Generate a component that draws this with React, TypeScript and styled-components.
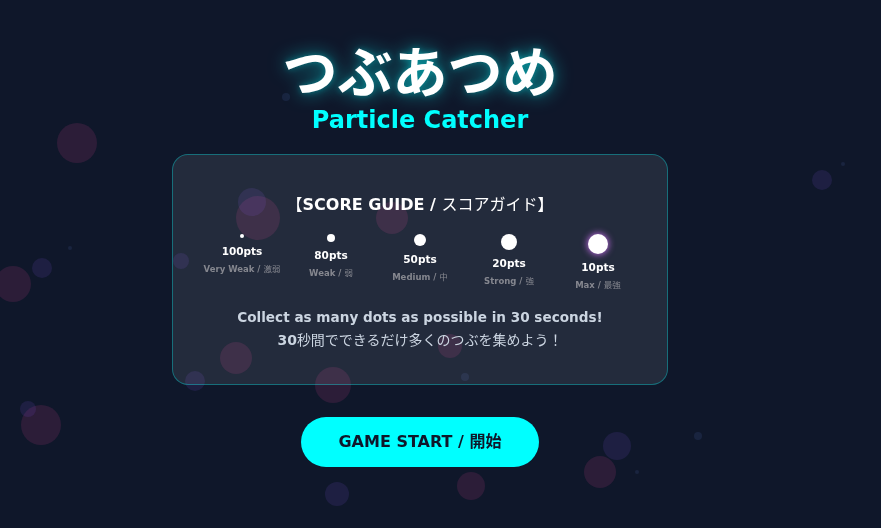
import styled, { createGlobalStyle } from "styled-components";

const GlobalStyle = createGlobalStyle`
  html, body {
    margin: 0;
    padding: 0;
    background: #0f172a;
    font-family: "DejaVu Sans", "Noto Sans CJK JP", sans-serif;
    color: #ffffff;
    overflow: hidden;
  }
`;

const Particles = styled.div`
  position: fixed;
  inset: 0;
  z-index: 0;
  overflow: hidden;
  pointer-events: none;
`;

const Particle = styled.span<{ $x: number; $y: number; $d: number; $c: string }>`
  position: absolute;
  left: ${(p) => p.$x - p.$d / 2}px;
  top: ${(p) => p.$y - p.$d / 2}px;
  width: ${(p) => p.$d}px;
  height: ${(p) => p.$d}px;
  border-radius: 50%;
  background: ${(p) => p.$c};
`;

const Page = styled.main`
  position: relative;
  z-index: 1;
  width: 840px;
  min-height: 528px;
  box-sizing: border-box;
  padding-top: 39px;
  display: flex;
  flex-direction: column;
  align-items: center;
`;

const Title = styled.h1`
  margin: 0;
  font-family: "Noto Sans CJK JP", sans-serif;
  font-size: 55px;
  line-height: 58px;
  font-weight: 700;
  color: #ffffff;
  text-shadow: 0 0 18px rgba(0, 255, 255, 0.55), 0 0 6px rgba(0, 255, 255, 0.3);
`;

const Subtitle = styled.h2`
  margin: 9px 0 0;
  font-size: 24px;
  line-height: 28px;
  font-weight: 700;
  color: #00ffff;
`;

const Card = styled.section`
  margin-top: 20px;
  width: 496px;
  box-sizing: border-box;
  padding: 36px 24px 33px;
  border: 1px solid rgba(0, 255, 255, 0.32);
  border-radius: 16px;
  background: rgba(255, 255, 255, 0.085);
  display: flex;
  flex-direction: column;
  align-items: center;
`;

const GuideTitle = styled.h3`
  margin: 0 0 17px;
  font-size: 16px;
  line-height: 24px;
  font-weight: 700;
  color: #ffffff;
`;

const Jp = styled.span`
  font-family: "Noto Sans CJK JP", sans-serif;
  font-weight: 400;
`;

const Levels = styled.div`
  display: flex;
  justify-content: center;
  align-items: flex-start;
  gap: 9px;
`;

const Level = styled.div`
  width: 80px;
  display: flex;
  flex-direction: column;
  align-items: center;
`;

const Dot = styled.span<{ $size: number; $glow?: boolean }>`
  width: ${(p) => p.$size}px;
  height: ${(p) => p.$size}px;
  border-radius: 50%;
  background: #ffffff;
  margin-bottom: 6px;
  box-shadow: ${(p) => (p.$glow ? "0 0 6px 1px rgba(217, 120, 255, 0.75)" : "none")};
`;

const Points = styled.span`
  font-size: 10.5px;
  line-height: 14px;
  font-weight: 700;
  color: #ffffff;
`;

const Strength = styled.span`
  margin-top: 4px;
  font-size: 8.5px;
  line-height: 12px;
  font-weight: 700;
  color: #85878f;
  white-space: nowrap;
`;

const Desc = styled.p`
  margin: 15px 0 0;
  font-size: 14px;
  line-height: 22px;
  color: #cbd5e1;
  text-align: center;
`;

const DescEn = styled.span`
  display: block;
  font-size: 13.6px;
  font-weight: 700;
`;

const DescJp = styled.span`
  display: block;
  font-family: "Noto Sans CJK JP", sans-serif;
  font-weight: 400;
  b {
    font-family: "DejaVu Sans", sans-serif;
    font-weight: 700;
  }
`;

const StartButton = styled.button`
  margin-top: 32px;
  padding: 14px 37px;
  border: none;
  border-radius: 999px;
  background: #00ffff;
  color: #0f172a;
  font-family: "DejaVu Sans", "Noto Sans CJK JP", sans-serif;
  font-size: 16px;
  line-height: 22px;
  font-weight: 700;
  cursor: pointer;
`;

const PINK = "rgba(236, 72, 153, 0.13)";
const VIOLET = "rgba(139, 92, 246, 0.12)";
const BLUE = "rgba(96, 130, 220, 0.12)";

const particles = [
  { x: 77, y: 143, d: 40, c: PINK },
  { x: 13, y: 284, d: 36, c: PINK },
  { x: 42, y: 268, d: 20, c: VIOLET },
  { x: 70, y: 248, d: 4, c: BLUE },
  { x: 41, y: 425, d: 40, c: PINK },
  { x: 28, y: 409, d: 16, c: VIOLET },
  { x: 195, y: 381, d: 20, c: VIOLET },
  { x: 236, y: 358, d: 32, c: PINK },
  { x: 333, y: 385, d: 36, c: PINK },
  { x: 450, y: 346, d: 24, c: PINK },
  { x: 465, y: 377, d: 8, c: BLUE },
  { x: 337, y: 494, d: 24, c: VIOLET },
  { x: 471, y: 486, d: 28, c: PINK },
  { x: 617, y: 446, d: 28, c: VIOLET },
  { x: 600, y: 472, d: 32, c: PINK },
  { x: 637, y: 472, d: 4, c: BLUE },
  { x: 698, y: 436, d: 8, c: BLUE },
  { x: 822, y: 180, d: 20, c: VIOLET },
  { x: 843, y: 164, d: 4, c: BLUE },
  { x: 258, y: 218, d: 44, c: PINK },
  { x: 252, y: 202, d: 28, c: VIOLET },
  { x: 392, y: 218, d: 32, c: PINK },
  { x: 181, y: 261, d: 16, c: VIOLET },
  { x: 286, y: 97, d: 8, c: BLUE },
];

const levels = [
  { pts: 100, size: 4, en: "Very Weak", jp: "激弱" },
  { pts: 80, size: 8, en: "Weak", jp: "弱" },
  { pts: 50, size: 12, en: "Medium", jp: "中" },
  { pts: 20, size: 16, en: "Strong", jp: "強" },
  { pts: 10, size: 20, en: "Max", jp: "最強", glow: true },
];

export default function App() {
  return (
    <>
      <GlobalStyle />
      <Particles>
        {particles.map((p, i) => (
          <Particle key={i} $x={p.x} $y={p.y} $d={p.d} $c={p.c} />
        ))}
      </Particles>
      <Page>
        <Title>つぶあつめ</Title>
        <Subtitle>Particle Catcher</Subtitle>

        <Card>
          <GuideTitle>
            <Jp>【</Jp>SCORE GUIDE / <Jp>スコアガイド】</Jp>
          </GuideTitle>
          <Levels>
            {levels.map((lv) => (
              <Level key={lv.pts}>
                <Dot $size={lv.size} $glow={lv.glow} />
                <Points>{lv.pts}pts</Points>
                <Strength>
                  {lv.en} / <Jp>{lv.jp}</Jp>
                </Strength>
              </Level>
            ))}
          </Levels>
          <Desc>
            <DescEn>Collect as many dots as possible in 30 seconds!</DescEn>
            <DescJp>
              <b>30</b>秒間でできるだけ多くのつぶを集めよう！
            </DescJp>
          </Desc>
        </Card>

        <StartButton>GAME START / 開始</StartButton>
      </Page>
    </>
  );
}
